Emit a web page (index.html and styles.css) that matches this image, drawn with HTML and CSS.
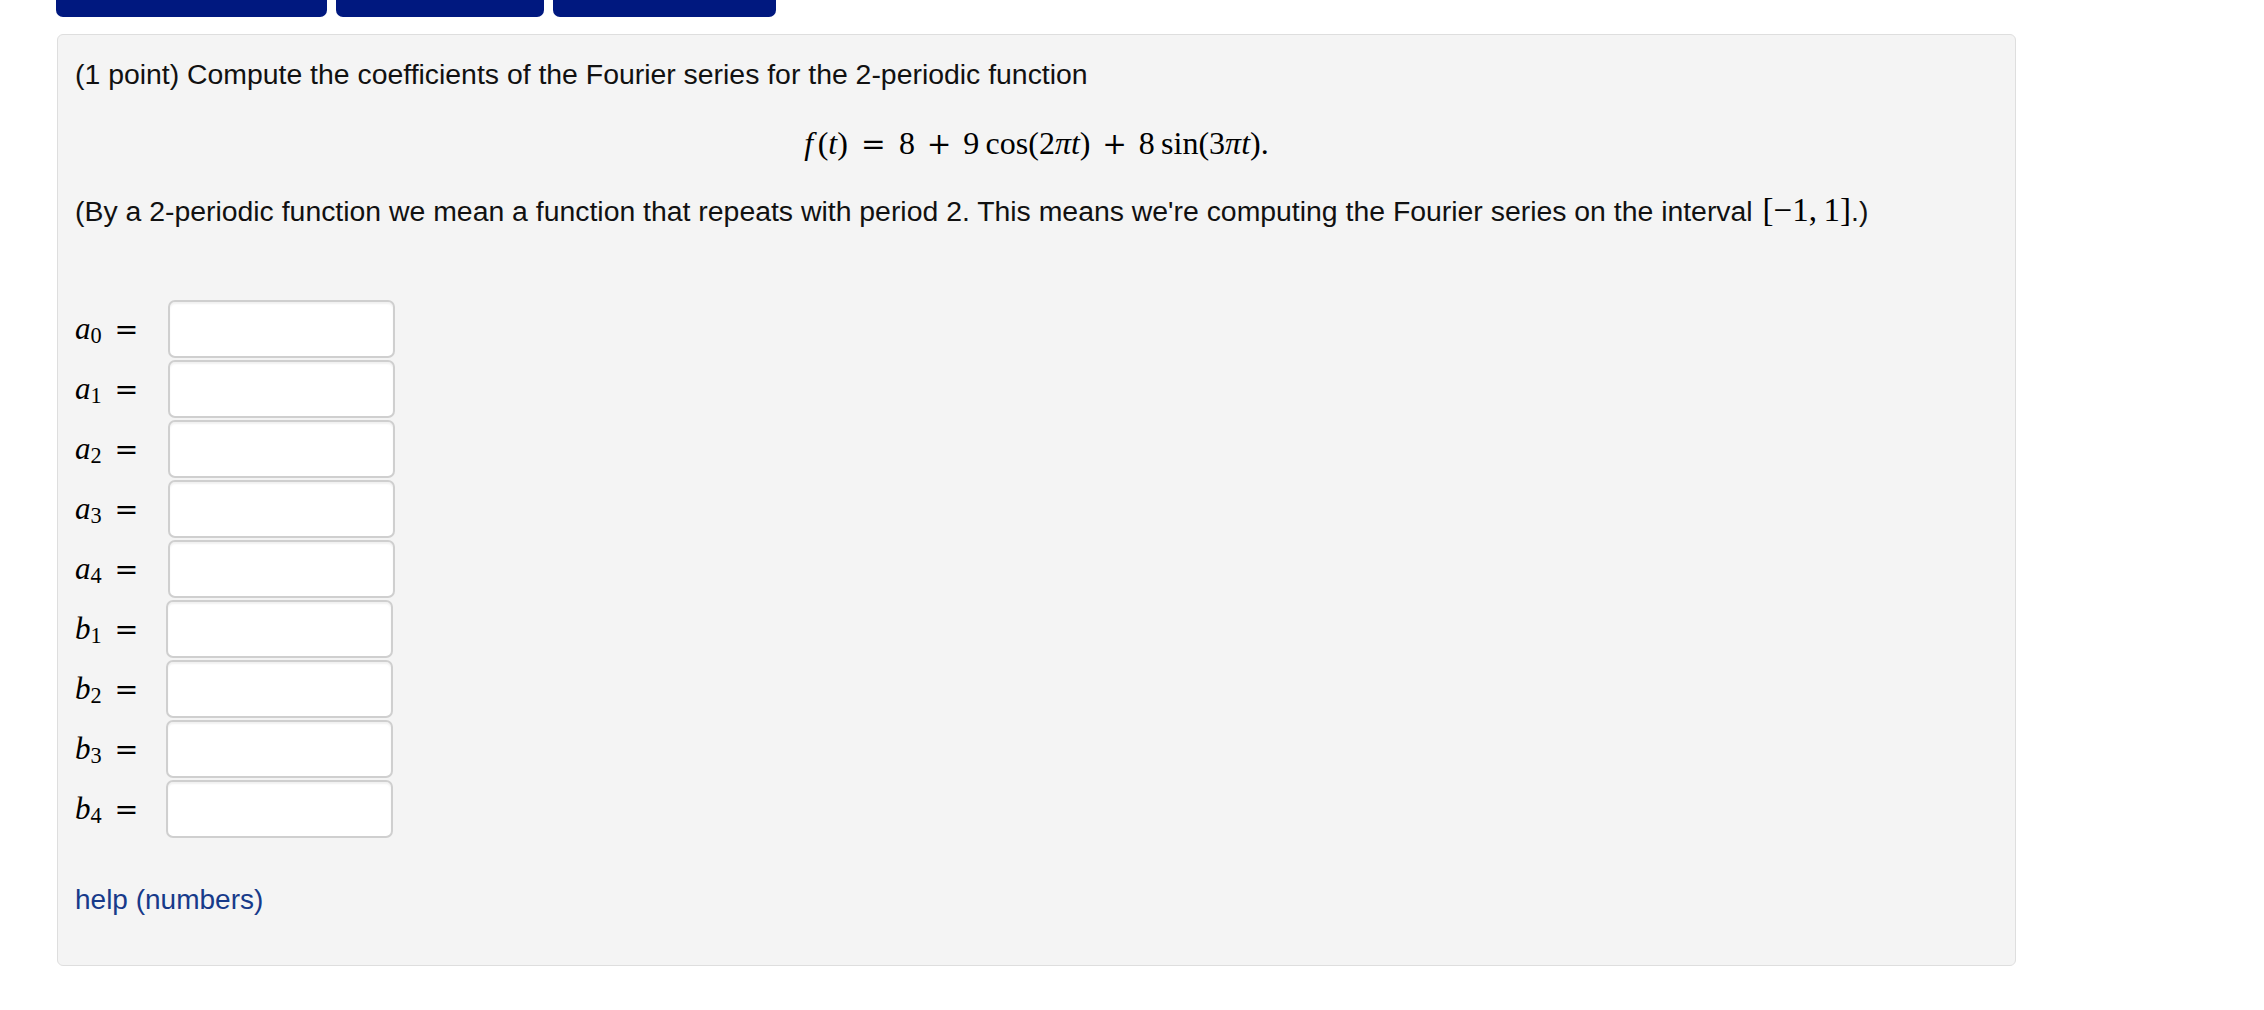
FILE: index.html
```html
<!DOCTYPE html>
<html lang="en">
<head>
  <meta charset="UTF-8">
  <title>Fourier coefficients</title>
  <link rel="stylesheet" href="styles.css">
</head>
<body>
  <div class="page">
    <nav class="tabs">
      <a class="tab tab-prev" href="#"></a>
      <a class="tab tab-list" href="#"></a>
      <a class="tab tab-next" href="#"></a>
    </nav>

    <div class="problem">
      <p class="line first">(1 point) Compute the coefficients of the Fourier series for the 2-periodic function</p>
      <p class="line display">
        <span class="math big"><i class="f">f</i>(<i>t</i>)<span class="rel">=</span>8<span class="bin">+</span>9<span class="fn">cos</span>(2<i>πt</i>)<span class="bin">+</span>8<span class="fn">sin</span>(3<i>πt</i>).</span>
      </p>
      <p class="line">(By a 2-periodic function we mean a function that repeats with period 2. This means we're computing the Fourier series on the interval <span class="math interval">[−1,<span class="thin"></span>1]</span>.)</p>

      <div class="answers">
        <div class="row"><span class="math lbl"><i>a</i><sub>0</sub><span class="rel">=</span></span><input class="ans" type="text"></div>
        <div class="row"><span class="math lbl"><i>a</i><sub>1</sub><span class="rel">=</span></span><input class="ans" type="text"></div>
        <div class="row"><span class="math lbl"><i>a</i><sub>2</sub><span class="rel">=</span></span><input class="ans" type="text"></div>
        <div class="row"><span class="math lbl"><i>a</i><sub>3</sub><span class="rel">=</span></span><input class="ans" type="text"></div>
        <div class="row"><span class="math lbl"><i>a</i><sub>4</sub><span class="rel">=</span></span><input class="ans" type="text"></div>
        <div class="row"><span class="math lbl b"><i>b</i><sub>1</sub><span class="rel">=</span></span><input class="ans" type="text"></div>
        <div class="row"><span class="math lbl b"><i>b</i><sub>2</sub><span class="rel">=</span></span><input class="ans" type="text"></div>
        <div class="row"><span class="math lbl b"><i>b</i><sub>3</sub><span class="rel">=</span></span><input class="ans" type="text"></div>
        <div class="row"><span class="math lbl b"><i>b</i><sub>4</sub><span class="rel">=</span></span><input class="ans" type="text"></div>
      </div>

      <p class="line help"><a href="#">help (numbers)</a></p>
    </div>
  </div>
</body>
</html>
```

FILE: styles.css
```css
body {
  margin: 0;
  background: #fff;
  font-family: "Liberation Sans", Arial, Helvetica, sans-serif;
  font-size: 28.4px;
  color: #111;
}
.page {
  padding-left: 56px;
  width: 1960px;
}
.tabs {
  display: flex;
  gap: 9px;
  height: 17px;
}
.tab {
  display: block;
  height: 17px;
  background: #00187f;
  border-radius: 0 0 7px 7px;
}
.tab-prev { width: 271px; }
.tab-list { width: 208px; }
.tab-next { width: 223px; }

.problem {
  margin-top: 17px;
  margin-left: 1px;
  background: #f4f4f4;
  border: 1px solid #dedede;
  border-radius: 6px;
  padding: 19px 17px 45px 17px;
}
.line {
  margin: 0;
  line-height: 40px;
}
.display {
  text-align: center;
  margin-top: 29px;
  margin-bottom: 26px;
}
.math {
  font-family: "Liberation Serif", "Times New Roman", serif;
  font-size: 31px;
  color: #000;
}
.math.big {
  font-size: 32px;
}
.math.interval {
  font-size: 33px;
  margin-left: 2px;
}
.math i {
  font-style: italic;
}
.math .f {
  margin-right: 0.14em;
}
.rel,
.bin {
  font-family: "DejaVu Serif", serif;
  font-size: 0.92em;
}
.rel {
  margin: 0 0.45em;
}
.bin {
  margin: 0 0.4em;
}
.fn {
  margin-left: 0.2em;
}
.thin {
  margin-left: 0.2em;
}

.answers {
  margin-top: 69px;
  display: flex;
  flex-direction: column;
  gap: 2px;
}
.row {
  display: flex;
  align-items: center;
  height: 58px;
}
.lbl {
  width: 66px;
  white-space: nowrap;
}
.lbl.b {
  width: 64px;
}
.lbl sub {
  font-size: 0.72em;
  vertical-align: -0.2em;
  line-height: 0;
}
.lbl .rel {
  margin: 0 0 0 0.45em;
}
.ans {
  box-sizing: border-box;
  width: 227px;
  height: 58px;
  margin: 0 0 0 27px;
  background: #fff;
  border: 2px solid #cfcfcf;
  border-radius: 7px;
  box-shadow: inset 0 2px 2px rgba(0,0,0,0.06);
  font-size: 24px;
  padding: 4px 10px;
}
.help {
  margin-top: 42px;
  font-size: 28px;
}
.help a {
  color: #173a8a;
  text-decoration: none;
}
```
